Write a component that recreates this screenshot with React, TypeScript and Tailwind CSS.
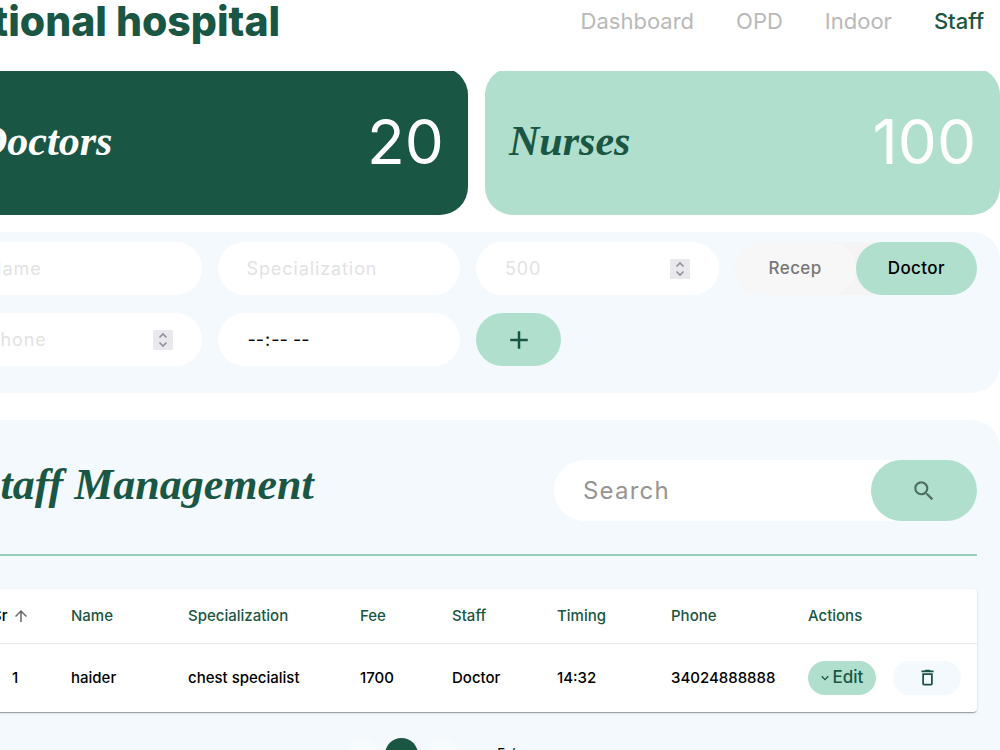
import React from 'react';
import { MdAdd, MdArrowUpward, MdDeleteOutline, MdSearch } from 'react-icons/md';

const navLinks = [
  { label: 'Dashboard', active: false },
  { label: 'OPD', active: false },
  { label: 'Indoor', active: false },
  { label: 'Staff', active: true },
];

const columns = [
  { label: 'Name', width: 'w-[117px]' },
  { label: 'Specialization', width: 'w-[172px]' },
  { label: 'Fee', width: 'w-[92px]' },
  { label: 'Staff', width: 'w-[105px]' },
  { label: 'Timing', width: 'w-[114px]' },
  { label: 'Phone', width: 'w-[137px]' },
  { label: 'Actions', width: 'w-[185px]' },
];

const staff = [
  {
    sr: 1,
    name: 'haider',
    specialization: 'chest specialist',
    fee: '1700',
    role: 'Doctor',
    timing: '14:32',
    phone: '34024888888',
  },
];

const StepperIcon: React.FC = () => (
  <svg viewBox="0 0 20 20" className="h-5 w-5 flex-shrink-0" aria-hidden="true">
    <rect width="20" height="20" rx="1" fill="#e9e9ed" />
    <path
      d="M6.5 7.5 10 4l3.5 3.5M6.5 12.5 10 16l3.5-3.5"
      fill="none"
      stroke="#8f8f9d"
      strokeWidth="1.6"
    />
  </svg>
);

interface FieldProps {
  label: string;
  placeholder?: string;
  type?: 'text' | 'number' | 'time';
}

const Field: React.FC<FieldProps> = ({ label, placeholder, type = 'text' }) => (
  <div className="flex h-[53px] items-center rounded-full bg-white px-[29px]">
    <input
      type={type}
      aria-label={label}
      placeholder={placeholder}
      className="w-full min-w-0 appearance-none bg-transparent text-lg tracking-wider text-black outline-none [-moz-appearance:textfield] placeholder:text-[#e2e2e2] [&::-webkit-calendar-picker-indicator]:hidden [&::-webkit-inner-spin-button]:appearance-none"
    />
    {type === 'number' && <StepperIcon />}
  </div>
);

interface StatCardProps {
  title: string;
  value: number;
  className: string;
}

const StatCard: React.FC<StatCardProps> = ({ title, value, className }) => (
  <div className={`flex h-[148px] items-center justify-between rounded-[28px] px-6 ${className}`}>
    <h2 className="font-['Liberation_Serif',serif] text-[42px] font-bold italic">{title}</h2>
    <span className="text-[62px] text-white">{value}</span>
  </div>
);

export default function App() {
  return (
    <div className="h-screen overflow-hidden bg-white font-['Inter','Liberation_Sans',sans-serif]">
      <div className="-ml-[47px]">
        <header className="relative z-10 -ml-4 flex h-[71px] items-start justify-between bg-white pr-4">
          <h1 className="whitespace-nowrap text-[41px] leading-[42px] font-extrabold text-[#195643]">
            National hospital
          </h1>
          <nav className="flex gap-[42px] pt-1 text-[22px] leading-[34px]">
            {navLinks.map((link) => (
              <a
                key={link.label}
                href="#"
                className={link.active ? 'font-medium text-[#195643]' : 'text-[#b9b9b9]'}
              >
                {link.label}
              </a>
            ))}
          </nav>
        </header>

        {/* cards slide under the header */}
        <section className="-mt-1 grid grid-cols-2 gap-[17px]">
          <StatCard title="Doctors" value={20} className="bg-[#195643] text-white" />
          <StatCard title="Nurses" value={100} className="bg-[#b0dfcd] text-[#195643]" />
        </section>

        <form className="mt-[17px] grid grid-cols-4 gap-x-4 gap-y-[18px] rounded-[28px] bg-[#f3f9fc] pt-[10px] pr-[23px] pb-[27px] pl-1.5">
          <Field label="Name" placeholder="Name" />
          <Field label="Specialization" placeholder="Specialization" />
          <Field label="Fee" placeholder="500" type="number" />
          <div className="flex h-[53px] rounded-full bg-[#f4f4f4] text-[17px] font-medium tracking-wide">
            <button type="button" className="flex-1 rounded-full bg-[#f7f7f7] text-[#777777]">
              Recep
            </button>
            <button type="button" className="flex-1 rounded-full bg-[#b0dfcd] text-black">
              Doctor
            </button>
          </div>
          <Field label="Phone" placeholder="Phone" type="number" />
          <Field label="Timing" type="time" />
          <button
            type="button"
            aria-label="Add staff"
            className="flex h-[53px] w-[85px] items-center justify-center rounded-full bg-[#b0dfcd] text-[#195643]"
          >
            <MdAdd className="h-[30px] w-[30px]" />
          </button>
        </form>

        <section className="mt-[27px] rounded-[28px] bg-[#f3f9fc] px-[23px] pt-10 pb-10">
          <div className="flex items-start justify-between border-b-2 border-[#97cfba] pb-[33px]">
            <h2 className="font-['Liberation_Serif',serif] text-[44px] leading-[50px] font-bold italic text-[#195643]">
              Staff Management
            </h2>
            <div className="flex h-[61px] w-[423px] rounded-full bg-white">
              <input
                type="text"
                aria-label="Search"
                placeholder="Search"
                className="w-full min-w-0 bg-transparent pl-[29px] text-2xl tracking-wider outline-none placeholder:text-[#959595]"
              />
              <button
                type="button"
                aria-label="Search staff"
                className="flex w-[106px] flex-shrink-0 items-center justify-center rounded-full bg-[#b0dfcd] text-[#4f6f63]"
              >
                <MdSearch className="h-[26px] w-[26px]" />
              </button>
            </div>
          </div>

          <div className="mt-[33px] rounded bg-white shadow-[0_2px_1px_-1px_rgba(0,0,0,0.2),0_1px_1px_0_rgba(0,0,0,0.14),0_1px_3px_0_rgba(0,0,0,0.12)]">
            <table className="w-full table-fixed text-left text-[15px] font-medium">
              <thead className="text-[#195643]">
                <tr className="h-[54px] border-b border-[#e5e8e9]">
                  <th className="w-[79px] pl-4 font-medium">
                    <span className="flex items-center gap-1 text-black">
                      Sr <MdArrowUpward className="h-[18px] w-[18px] text-[#666666]" />
                    </span>
                  </th>
                  {columns.map((column) => (
                    <th key={column.label} className={`pl-4 font-medium ${column.width}`}>
                      {column.label}
                    </th>
                  ))}
                </tr>
              </thead>
              <tbody>
                {staff.map((row) => (
                  <tr key={row.sr} className="h-[69px] whitespace-nowrap">
                    <td className="pl-9">{row.sr}</td>
                    <td className="pl-4">{row.name}</td>
                    <td className="pl-4">{row.specialization}</td>
                    <td className="pl-4">{row.fee}</td>
                    <td className="pl-4">{row.role}</td>
                    <td className="pl-4">{row.timing}</td>
                    <td className="pl-4">{row.phone}</td>
                    <td className="pl-4">
                      <div className="flex gap-[17px] text-[#195643]">
                        <button
                          type="button"
                          className="flex h-[34px] w-[68px] items-center justify-center gap-1 rounded-full bg-[#b0dfcd] text-[17px]"
                        >
                          <svg viewBox="0 0 8 8" className="h-2 w-2" aria-hidden="true">
                            <path d="M.7 2.3 4 5.6l3.3-3.3" fill="none" stroke="currentColor" strokeWidth="1.3" />
                          </svg>
                          Edit
                        </button>
                        <button
                          type="button"
                          aria-label="Delete"
                          className="flex h-[34px] w-[68px] items-center justify-center rounded-full bg-[#f3f9fc]"
                        >
                          <MdDeleteOutline className="h-[21px] w-[21px]" />
                        </button>
                      </div>
                    </td>
                  </tr>
                ))}
              </tbody>
            </table>
          </div>

          <div className="mt-[26px] flex items-center justify-center gap-[7px] text-[15px]">
            <button type="button" aria-label="Previous page" className="h-[33px] w-[33px] rounded-full bg-[#f7fbfd]" />
            <button
              type="button"
              className="h-[33px] w-[33px] rounded-full bg-[#195643] text-xs text-white"
            >
              1
            </button>
            <button type="button" aria-label="Next page" className="h-[33px] w-[33px] rounded-full bg-[#f7fbfd]" />
            <select aria-label="Rows per page" className="ml-8 w-[112px] appearance-none bg-transparent">
              <option>5 / page</option>
              <option>10 / page</option>
            </select>
          </div>
        </section>
      </div>
    </div>
  );
}
